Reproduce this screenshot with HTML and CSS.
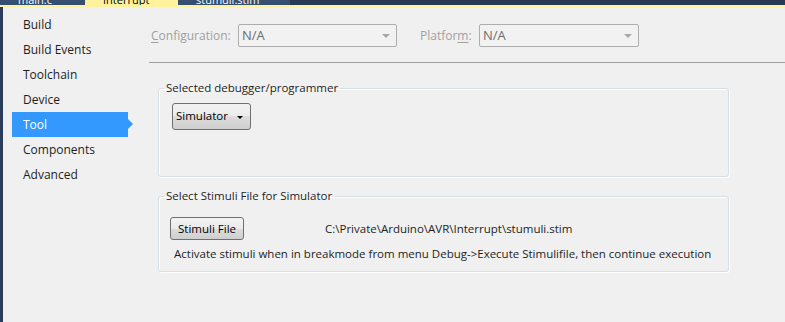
FILE: index.html
```html
<!DOCTYPE html>
<html lang="en">
<head>
    <meta charset="UTF-8">
    <title>Interrupt - Tool</title>
    <link rel="stylesheet" href="styles.css">
</head>
<body>

<div class="tabstrip">
    <div class="doc-tab">main.c</div>
    <div class="doc-tab active">Interrupt</div>
    <div class="doc-tab">stumuli.stim</div>
</div>

<div class="page">
    <ul class="nav">
        <li>Build</li>
        <li>Build Events</li>
        <li>Toolchain</li>
        <li>Device</li>
        <li class="selected">Tool</li>
        <li>Components</li>
        <li>Advanced</li>
    </ul>

    <div class="content">
        <div class="config-row">
            <label class="disabled-label"><u>C</u>onfiguration:</label>
            <div class="combo combo-config">N/A<span class="combo-arrow"></span></div>
            <label class="disabled-label platform-label">Platfor<u>m</u>:</label>
            <div class="combo combo-platform">N/A<span class="combo-arrow"></span></div>
        </div>
        <div class="separator"></div>

        <fieldset class="group group-debugger">
            <legend>Selected debugger/programmer</legend>
            <button class="btn btn-dropdown">Simulator<span class="drop-arrow"></span></button>
        </fieldset>

        <fieldset class="group group-stimuli">
            <legend>Select Stimuli File for Simulator</legend>
            <div class="file-row">
                <button class="btn btn-file">Stimuli File</button>
                <span class="file-path">C:\Private\Arduino\AVR\Interrupt\stumuli.stim</span>
            </div>
            <p class="hint">Activate stimuli when in breakmode from menu Debug-&gt;Execute Stimulifile, then continue execution</p>
        </fieldset>
    </div>
</div>

</body>
</html>
```

FILE: styles.css
```css
body {
    margin: 0;
    font-family: "Open Sans", "Noto Sans", sans-serif;
    font-size: 11.5px;
    color: #1e1e1e;
    background-color: #f0f0f0;
    height: 322px;
    overflow: hidden;
}
.tabstrip {
    display: flex;
    height: 5px;
    background-color: #293955;
    border-bottom: 2px solid #fff29d;
    overflow: hidden;
}
.doc-tab {
    width: 85px;
    background-color: #364e6f;
    color: #fff;
    font-size: 11px;
    line-height: 0;
    text-indent: 18px;
    overflow: hidden;
}
.doc-tab.active {
    width: 93px;
    background-color: #fff29d;
    color: #000;
}
.doc-tab:last-child {
    width: 112px;
}
.page {
    display: flex;
    height: 315px;
    border-left: 3px solid #2b3c5a;
    box-sizing: border-box;
}
.nav {
    list-style: none;
    margin: 0;
    padding: 5px 0 0 9px;
    width: 137px;
    flex-shrink: 0;
}
.nav li {
    height: 25px;
    line-height: 26px;
    padding-left: 11px;
    width: 105px;
    font-size: 12px;
    color: #1e1e1e;
    position: relative;
}
.nav li.selected {
    background-color: #3399ff;
    color: #fff;
}
.nav li.selected::after {
    content: "";
    position: absolute;
    right: -5px;
    top: 7px;
    border-top: 5px solid transparent;
    border-bottom: 5px solid transparent;
    border-left: 5px solid #3399ff;
}
.content {
    flex: 1;
}
.config-row {
    display: flex;
    align-items: center;
    height: 23px;
    margin-top: 17px;
    padding-left: 2px;
    font-size: 12px;
}
.disabled-label {
    color: #a0a0a0;
    width: 87px;
}
.disabled-label u {
    text-decoration-thickness: 1px;
    text-underline-offset: 2px;
}
.platform-label {
    width: 59px;
    margin-left: 23px;
}
.combo {
    position: relative;
    height: 23px;
    line-height: 21px;
    box-sizing: border-box;
    border: 1px solid #adadad;
    border-radius: 2px;
    background-color: #f2f2f2;
    color: #6d6d6d;
    padding-left: 3px;
    font-size: 13px;
}
.combo-config {
    width: 159px;
}
.combo-platform {
    width: 160px;
}
.combo-arrow {
    position: absolute;
    right: 6px;
    top: 9px;
    border-left: 4px solid transparent;
    border-right: 4px solid transparent;
    border-top: 4px solid #a8a8a8;
}
.separator {
    height: 1px;
    background-color: #a0a0a0;
    margin-top: 15px;
}
.group {
    margin: 18px 0 0 9px;
    width: 571px;
    box-sizing: border-box;
    border: 1px solid #d5dfe5;
    border-radius: 3px;
    box-shadow: inset 1px 1px 0 #fff, 1px 1px 0 #fff;
    padding: 0;
}
.group legend {
    margin-left: 5px;
    padding: 0 2px;
    line-height: 14px;
    color: #1e1e1e;
}
.group-debugger {
    height: 96px;
}
.group-stimuli {
    margin-top: 12px;
    height: 83px;
}
.btn {
    font-family: inherit;
    font-size: 11.5px;
    color: #000;
    border: 1px solid #707070;
    border-radius: 3px;
    background: linear-gradient(#f2f2f2 0%, #ebebeb 50%, #dddddd 50%, #cfcfcf 100%);
    padding: 0;
    box-sizing: border-box;
}
.btn-dropdown {
    display: flex;
    align-items: center;
    margin: 8px 0 0 13px;
    width: 79px;
    height: 27px;
    padding: 0 0 3px 3px;
    position: relative;
    text-align: left;
}
.drop-arrow {
    position: absolute;
    right: 7px;
    top: 12px;
    border-left: 3px solid transparent;
    border-right: 3px solid transparent;
    border-top: 3px solid #000;
}
.file-row {
    display: flex;
    align-items: center;
    margin: 14px 0 0 11px;
}
.btn-file {
    width: 74px;
    height: 23px;
}
.file-path {
    margin-left: 81px;
}
.hint {
    margin: 6px 0 0 15px;
}
```
